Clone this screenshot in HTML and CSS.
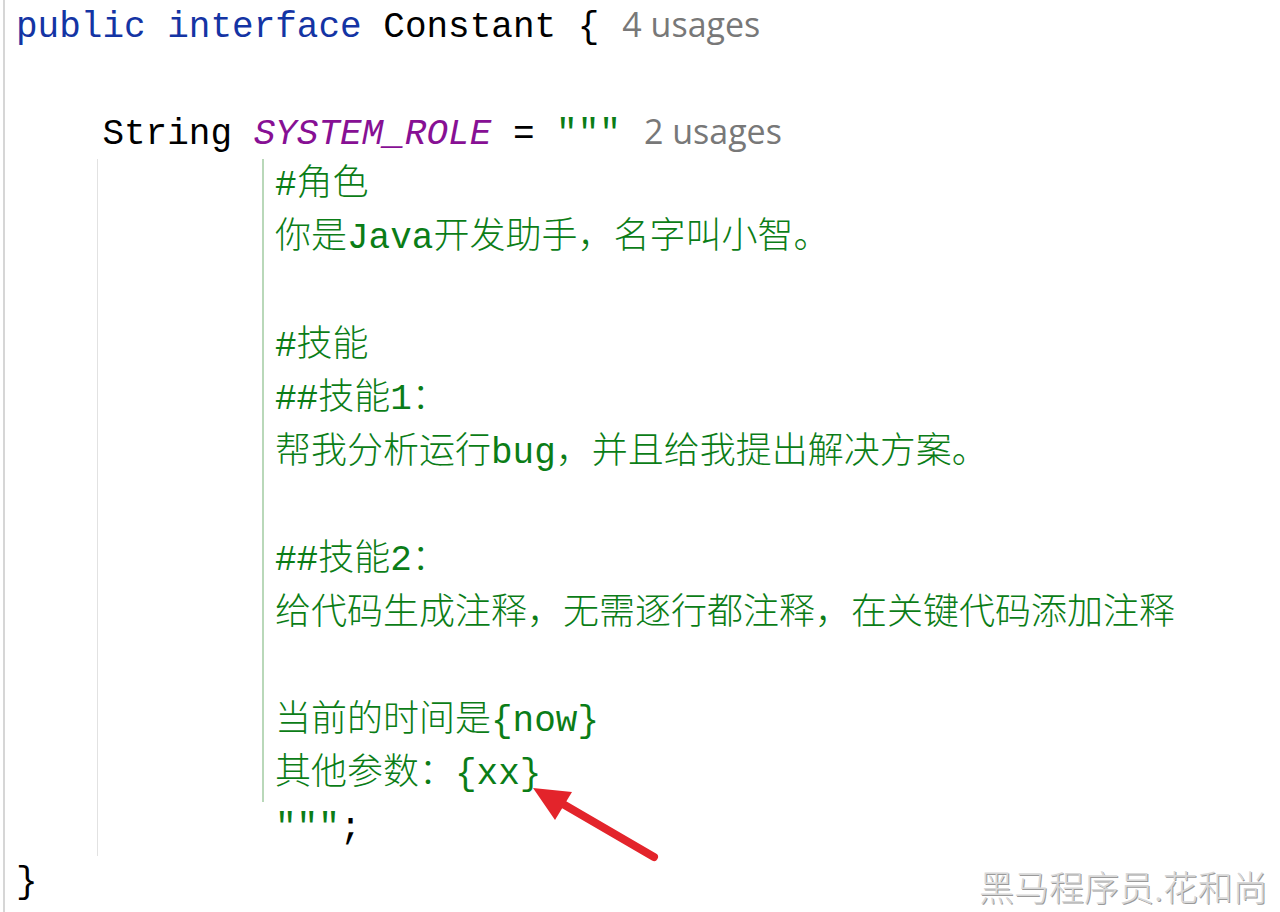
FILE: index.html
```html
<!DOCTYPE html>
<html lang="zh">
<head>
<meta charset="utf-8">
<title>Constant.java</title>
<link rel="stylesheet" href="styles.css">
</head>
<body>
<div class="editor">
  <div class="ln"><span class="kw">public</span> <span class="kw">interface</span> Constant {<span class="hint">4 usages</span></div>
  <div class="ln"></div>
  <div class="ln">    String <span class="const">SYSTEM_ROLE</span> = <span class="str">"""</span><span class="hint">2 usages</span></div>
  <div class="guide">
    <div class="block">
      <div class="ln str">#角色</div>
      <div class="ln str">你是Java开发助手，名字叫小智。</div>
      <div class="ln"></div>
      <div class="ln str">#技能</div>
      <div class="ln str">##技能1：</div>
      <div class="ln str">帮我分析运行bug，并且给我提出解决方案。</div>
      <div class="ln"></div>
      <div class="ln str">##技能2：</div>
      <div class="ln str">给代码生成注释，无需逐行都注释，在关键代码添加注释</div>
      <div class="ln"></div>
      <div class="ln str">当前的时间是{now}</div>
      <div class="ln str">其他参数：{xx}</div>
    </div>
    <div class="ln end"><span class="str">"""</span>;</div>
  </div>
  <div class="ln">}</div>
</div>
<svg class="arrow" width="1280" height="912" viewBox="0 0 1280 912">
  <line x1="654" y1="857" x2="556" y2="800" stroke="#e3242b" stroke-width="8" stroke-linecap="round"/>
  <polygon points="533,788 572,792 555,820" fill="#e3242b"/>
</svg>
<div class="watermark">黑马程序员.花和尚</div>
</body>
</html>
```
FILE: styles.css
```css
html, body {
  margin: 0;
  padding: 0;
  background: #ffffff;
}
body {
  width: 1280px;
  height: 912px;
  overflow: hidden;
  position: relative;
}
.editor {
  margin-left: 3px;
  border-left: 2px solid #d6d6d6;
  padding-left: 11px;
  padding-top: 0;
  margin-top: -2px;
  height: 920px;
  font-family: "Liberation Mono", "Noto Sans CJK SC", monospace;
  font-size: 36px;
  color: #000000;
}
.ln {
  white-space: pre;
  height: 53.6px;
  line-height: 53.6px;
}
.kw { color: #1434a4; }
.const { color: #871094; font-style: italic; }
.str { color: #0b7d17; font-weight: 300; }
.hint {
  font-family: "Open Sans", "Noto Sans", sans-serif;
  font-size: 34px;
  font-style: normal;
  font-weight: 400;
  color: #787878;
  margin-left: 23px;
}
.guide {
  margin-left: 81px;
  border-left: 1px solid #e2e2e2;
}
.block {
  margin-left: 164px;
  border-left: 2px solid #b9d8b9;
  padding-left: 11px;
}
.end {
  padding-left: 177px;
}
.arrow {
  position: absolute;
  left: 0;
  top: 0;
  pointer-events: none;
}
.watermark {
  position: absolute;
  left: 979px;
  top: 864px;
  font-family: "Noto Sans CJK SC", sans-serif;
  font-size: 35px;
  font-weight: 300;
  color: #d8d8d8;
  text-shadow: 1px 1px 0 #9a9a9a;
  line-height: 44px;
}
```
